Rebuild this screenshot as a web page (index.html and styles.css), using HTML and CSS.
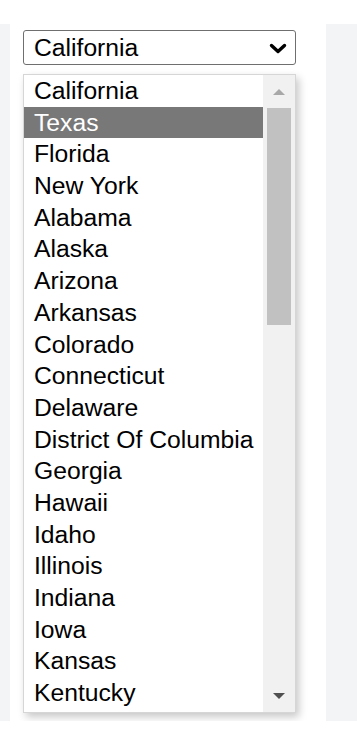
FILE: index.html
```html
<!DOCTYPE html>
<html lang="en">

<head>
    <meta charset="UTF-8">
    <meta name="viewport" content="width=device-width, initial-scale=1.0">
    <title>State Select</title>
    <link rel="stylesheet" href="styles.css">
</head>

<body>
    <div class="page">
        <div class="panel">
            <div class="select-box">
                <span class="select-value">California</span>
                <svg class="chevron" width="18" height="11" viewBox="0 0 18 11">
                    <polyline points="2.5,2.5 9,8.5 15.5,2.5" fill="none" stroke="#000" stroke-width="3.4" stroke-linecap="round" stroke-linejoin="round"/>
                </svg>
            </div>

            <div class="listbox">
                <ul class="options">
                    <li>California</li>
                    <li class="selected">Texas</li>
                    <li>Florida</li>
                    <li>New York</li>
                    <li>Alabama</li>
                    <li>Alaska</li>
                    <li>Arizona</li>
                    <li>Arkansas</li>
                    <li>Colorado</li>
                    <li>Connecticut</li>
                    <li>Delaware</li>
                    <li>District Of Columbia</li>
                    <li>Georgia</li>
                    <li>Hawaii</li>
                    <li>Idaho</li>
                    <li>Illinois</li>
                    <li>Indiana</li>
                    <li>Iowa</li>
                    <li>Kansas</li>
                    <li>Kentucky</li>
                </ul>
                <div class="scrollbar">
                    <div class="scroll-btn">
                        <span class="arrow-up"></span>
                    </div>
                    <div class="scroll-track">
                        <div class="scroll-thumb"></div>
                    </div>
                    <div class="scroll-btn">
                        <span class="arrow-down"></span>
                    </div>
                </div>
            </div>
        </div>
    </div>
</body>

</html>
```

FILE: styles.css
```css
body {
    margin: 0;
    background-color: #fff;
    font-family: "Liberation Sans", Arial, sans-serif;
    color: #000;
}

.page {
    margin-top: 24px;
    height: 697px;
    background-color: #f3f4f6;
    padding: 0 31px 0 10px;
}

.panel {
    height: 100%;
    background-color: #fff;
    padding: 6px 30px 0 13px;
    box-sizing: border-box;
}

.select-box {
    width: 273px;
    height: 35px;
    box-sizing: border-box;
    border: 1px solid #6f6f6f;
    border-radius: 3px;
    display: flex;
    align-items: center;
    justify-content: space-between;
    padding: 2px 8px 0 10px;
    font-size: 24.7px;
}

.select-value {
    line-height: 1;
}

.listbox {
    margin-top: 9px;
    width: 273px;
    height: 639px;
    box-sizing: border-box;
    border: 1px solid #d6d6d6;
    box-shadow: 3px 4px 8px rgba(0, 0, 0, 0.22);
    display: flex;
    background-color: #fff;
    overflow: hidden;
}

.options {
    flex: 1;
    list-style: none;
    margin: 0;
    padding: 0;
    overflow: hidden;
}

.options li {
    height: 31.7px;
    line-height: 31.7px;
    padding-left: 10px;
    font-size: 24.7px;
    white-space: nowrap;
}

.options li.selected {
    background-color: #787878;
    color: #fff;
}

.scrollbar {
    width: 32px;
    background-color: #f1f1f1;
    display: flex;
    flex-direction: column;
}

.scroll-btn {
    height: 33px;
    display: flex;
    align-items: center;
    justify-content: center;
}

.scroll-track {
    flex: 1;
    padding: 0 4px;
}

.scroll-thumb {
    height: 217px;
    background-color: #c1c1c1;
}

.arrow-up,
.arrow-down {
    width: 0;
    height: 0;
    border-left: 6px solid transparent;
    border-right: 6px solid transparent;
}

.arrow-up {
    border-bottom: 6px solid #a8a8a8;
}

.arrow-down {
    border-top: 6px solid #505050;
}
```
